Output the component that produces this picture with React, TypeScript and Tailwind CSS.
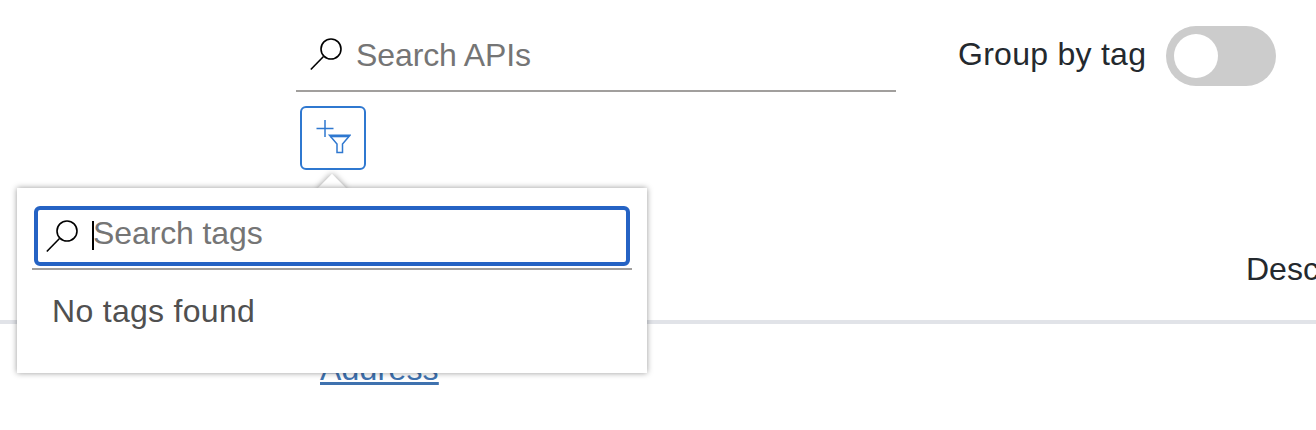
export default function App() {
  return (
    <div className="relative w-[1316px] h-[430px] overflow-hidden bg-white font-['Liberation_Sans',Arial,sans-serif] text-[32px]">
      <div className="flex">
        <div className="ml-[296px] w-[600px]">
          <div className="flex items-center h-[92px] border-b-2 border-[#a19f9d] pl-[14px] pt-[18px]">
            <svg width="34" height="34" viewBox="0 0 34 34" fill="none" stroke="#000" strokeWidth="1.6" className="shrink-0">
              <circle cx="21" cy="12" r="10" />
              <path d="M0.8 32.5L13.5 19.5" />
            </svg>
            <span className="ml-[12px] text-[#757575] leading-none pt-[1px] tracking-[-0.1px]">Search APIs</span>
          </div>
          <button className="mt-[14px] ml-[4px] w-[66px] h-[64px] border-2 border-[#2f78d0] rounded-[6px] flex items-center justify-center bg-white">
            <svg width="40" height="36" viewBox="0 0 40 36" fill="none" stroke="#2f78d0" strokeWidth="1.5" className="-ml-[5px]">
              <path d="M5.5 8.5H22.5M14 0V17" />
              <path d="M18.5 15.2H39L31.5 24V32.5H26V24Z" />
              <path d="M19 16.6H38" strokeWidth="1.4" />
            </svg>
          </button>
        </div>
        <div className="ml-[62px] mt-[26px] flex items-start">
          <span className="text-[#24292e] leading-[56px] tracking-[0.27px]">Group by tag</span>
          <div className="ml-[20px] w-[110px] h-[60px] rounded-full bg-[#cccccc] flex items-center pl-[8px]">
            <div className="w-[44px] h-[44px] rounded-full bg-white" />
          </div>
        </div>
      </div>
      <div className="mt-[76px] flex justify-end h-[46px] overflow-hidden">
        <span className="w-[70px] text-[#24292e] leading-[46px] overflow-hidden whitespace-nowrap">Description</span>
      </div>
      <div className="mt-[28px] h-[4px] bg-[#e1e3e8]" />
      <div className="mt-[21px] ml-[320px]">
        <a className="text-[#3f72af] underline leading-[38px] tracking-[0.2px]">Address</a>
      </div>

      <div className="absolute left-[322px] top-[178px] w-[20px] h-[20px] rotate-45 bg-white shadow-[0_0_6px_rgba(0,0,0,0.4)]" />
      <div className="absolute left-[17px] top-[188px] w-[630px] h-[185px] bg-white shadow-[0_0_6px_rgba(0,0,0,0.4)] pt-[18px] px-[15px]">
        <div className="relative flex items-center h-[60px] mx-[2px] border-4 border-[#2563c4] rounded-[6px] pl-[8px] pb-[6px]">
          <svg width="34" height="34" viewBox="0 0 34 34" fill="none" stroke="#000" strokeWidth="1.6" className="shrink-0 mt-[6px]">
            <circle cx="21" cy="12" r="10" />
            <path d="M0.8 32.5L13.5 19.5" />
          </svg>
          <span className="ml-[12px] w-[2px] h-[29px] bg-black shrink-0 mt-[4px]" />
          <span className="text-[#757575] leading-none -ml-[1px] tracking-[-0.1px]">Search tags</span>
        </div>
        <div className="mt-[2px] h-[2px] bg-[#a19f9d]" />
        <div className="mt-[21px] ml-[20px] text-[#505050] leading-[40px] tracking-[0.3px]">No tags found</div>
      </div>
    </div>
  );
}
